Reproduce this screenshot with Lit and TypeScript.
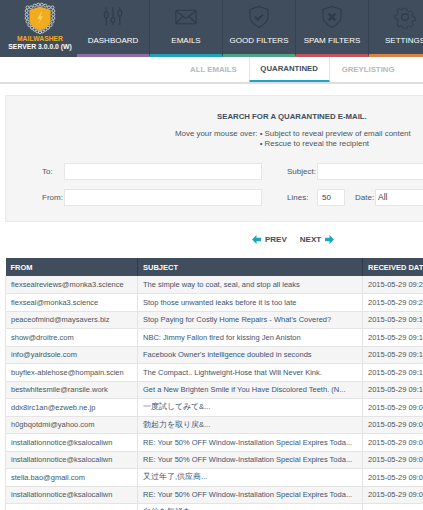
import { LitElement, html, css, svg } from "lit";
import { customElement } from "lit/decorators.js";

const NAV = [
  { label: "DASHBOARD", color: "#8f6fa3", icon: "sliders" },
  { label: "EMAILS", color: "#1ea5b8", icon: "mail" },
  { label: "GOOD FILTERS", color: "#4fa487", icon: "good" },
  { label: "SPAM FILTERS", color: "#c0565f", icon: "bad" },
  { label: "SETTINGS", color: "#d98545", icon: "gear" },
];

const LONG = "RE: Your 50% OFF Window-Installation Special Expires Toda...";
const ROWS: [string, string, string][] = [
  ["flexsealreviews@monka3.science", "The simple way to coat, seal, and stop all leaks", "2015-05-29 09:2"],
  ["flexseal@monka3.science", "Stop those unwanted leaks before it is too late", "2015-05-29 09:2"],
  ["peaceofmind@maysavers.biz", "Stop Paying for Costly Home Repairs - What's Covered?", "2015-05-29 09:1"],
  ["show@droitre.com", "NBC: Jimmy Fallon fired for kissing Jen Aniston", "2015-05-29 09:1"],
  ["info@yairdsole.com", "Facebook Owner's intelligence doubled in seconds", "2015-05-29 09:1"],
  ["buyflex-ablehose@hompain.scien", "The Compact.. Lightweight-Hose that Will Never Kink.", "2015-05-29 09:1"],
  ["bestwhitesmile@ransile.work", "Get a New Brighten Smile if You Have Discolored Teeth. (N...", "2015-05-29 09:1"],
  ["ddx8irc1an@ezweb.ne.jp", "一度試してみて&...", "2015-05-29 09:0"],
  ["h0gbqotdmi@yahoo.com", "勃起力を取り戻&...", "2015-05-29 09:0"],
  ["installationnotice@ksalocaliwn", LONG, "2015-05-29 09:0"],
  ["installationnotice@ksalocaliwn", LONG, "2015-05-29 09:0"],
  ["stella.bao@gmail.com", "又过年了,供应商...", "2015-05-29 09:0"],
  ["installationnotice@ksalocaliwn", LONG, "2015-05-29 09:0"],
  ["vinyl@ayerflex@hotbou.co.jp", "自信を無経あ...", "2015-05-29 09:0"],
];

const ICONS: Record<string, unknown> = {
  sliders: svg`<path d="M7 3v6M7 17v10M16 3v14M16 23v4M25 3v4M25 15v12"/><rect x="4.500" y="9" width="5" height="8" rx="2.500"/><rect x="13.500" y="17" width="5" height="6" rx="2.500"/><rect x="22.500" y="7" width="5" height="8" rx="2.500"/>`,
  mail: svg`<rect x="2.500" y="7" width="27" height="18" rx="1.500"/><path d="M3 8l13 10L29 8M3 24l9-9M29 24l-9-9"/>`,
  good: svg`<path d="M16 2l12 4v10c0 6-5 10-12 14C9 26 4 22 4 16V6z"/><path d="M10.500 15.500l4 4 7-7" stroke-width="2.800"/>`,
  bad: svg`<path d="M16 2l12 4v10c0 6-5 10-12 14C9 26 4 22 4 16V6z"/><path d="M11.500 11.500l9 9M20.500 11.500l-9 9" stroke-width="3"/>`,
  gear: svg`<path d="M13.500 2h5l1 4 3 1.500 3.600-2 3.400 3.500-2 3.500 1.200 3 4 1v5l-4 1-1.200 3 2 3.500-3.400 3.500-3.600-2-3 1.500-1 4h-5l-1-4-3-1.500-3.600 2L3 26l2-3.500L3.800 19.500l-4-1v-5l4-1L5 9.500 3 6l3.400-3.500 3.600 2 3-1.500z" transform="translate(2.800 2.800) scale(.82)"/><circle cx="16" cy="16" r="4.500"/>`,
};

const CHAIN = [
  [8,6],[12,4],[16,3],[20,3],[24,4],[28,6],[32,6],[33,10],[33,14],[33,18],[32,22],[30,26],[27,29],[24,31],[21,33],[18,34],[15,33],[12,31],[9,29],[6,26],[4,22],[3,18],[3,14],[3,10],[4,6],
];

@customElement("app-root")
export class AppRoot extends LitElement {
  static styles = css`
    :host { display: block; width: 423px; height: 510px; overflow: hidden; background: #fff;
      font-family: "Liberation Sans", Arial, sans-serif; color: #4a5560; font-size: 7.500px; }
    .page { width: 441px; }
    nav { display: flex; height: 57px; background: #3f4d5c; }
    .brand { width: 77px; padding-left: 3px; box-sizing: border-box; flex: none; height: 54px; display: flex; flex-direction: column; align-items: center; color: #fff; font-weight: 700; font-size: 6.800px; line-height: 8px; white-space: nowrap; }
    .brand svg { width: 32px; height: 33px; margin-top: 2px; display: block; }
    .brand b { color: #f1ab1f; font-size: 6.800px; }
    .item { width: 73px; flex: none; box-sizing: border-box; height: 57px; border-bottom: 3px solid; border-right: 1px solid #35424f; display: flex; flex-direction: column; align-items: center; color: #fff; font-size: 8px; white-space: nowrap; }
    .item:first-of-type { width: 72px; border-left: 1px solid #35424f; }
    .item svg { width: 24px; height: 24px; margin-top: 5px; margin-bottom: 7px; fill: none; stroke: #2f3b48; stroke-width: 1.500; }
    .tabs { display: flex; height: 25px; border-bottom: 2px solid #dedede; padding-left: 190px; font-size: 7.800px; font-weight: 700; color: #b5b9bc; }
    .tab { display: flex; align-items: center; white-space: nowrap; }
    .tab.on { width: 81px; box-sizing: border-box; justify-content: center; margin: 0 12px; height: 25px; color: #3f4d5c; border-left: 1px solid #e3e3e3; border-right: 1px solid #e3e3e3; border-bottom: 2px solid #1ea5c4; }
    .panel { margin: 11px 0 0 5px; height: 127px; box-sizing: border-box; background: #f5f5f5; border: 1px solid #e9e9e9; border-right: none; padding-top: 16px; }
    .title { font-size: 7.800px; font-weight: 700; color: #3f4d5c; margin-left: 211px; line-height: 10px; }
    .help { display: grid; grid-template-columns: auto auto; justify-content: start; margin: 7px 0 0 169px; font-size: 7.900px; line-height: 9.500px; color: #4a5560; }
    .help span:nth-child(3) { grid-column: 2; }
    .form { display: flex; flex-direction: column; gap: 8.500px; margin-top: 15px; font-size: 8px; }
    .row { display: flex; align-items: center; height: 17px; }
    .row label { white-space: nowrap; flex: none; }
    .l1 { width: 22px; margin-left: 36px; }
    .l2 { width: 30px; margin-left: 25px; }
    .l3 { width: 20px; margin-left: 10px; }
    .box { flex: none; height: 17px; box-sizing: border-box; background: #fff; border: 1px solid #e6e6e6; padding-left: 4px; display: flex; align-items: center; color: #444; font-size: 8px; }
    .b1 { width: 198px; }
    .b2 { width: 120px; }
    .b3 { width: 28px; }
    .b4 { width: 70px; font-size: 8.500px; padding-left: 2px; }
    .pager { display: flex; align-items: center; gap: 13px; margin: 10px 0 0 252px; height: 15px; font-size: 8px; font-weight: 700; color: #3f4d5c; }
    .pager span { display: flex; align-items: center; gap: 4px; }
    .pager svg { width: 9px; height: 9px; fill: #1ea5c4; }
    table { margin: 11px 0 0 5px; border-collapse: collapse; table-layout: fixed; width: 436px; font-size: 7.500px; }
    col.c1 { width: 132px; } col.c2 { width: 225px; } col.c3 { width: 79px; }
    th { height: 18px; padding: 0 0 0 5px; background: #3f4d5c; color: #fff; text-align: left; font-size: 7.500px; white-space: nowrap; overflow: hidden; border-right: 1px solid #2f3b48; }
    td { height: 17.500px; padding: 0 0 0 5px; white-space: nowrap; overflow: hidden; border: 1px solid #e4e4e4; border-width: 0 1px 1px 0; box-sizing: border-box; color: #4a5560; }
    td.s { color: #3b5472; }
    td.c1 { border-left: 1px solid #e4e4e4; }
    tr:nth-child(odd) td { background: #f5f5f5; }
  `;

  render() {
    return html`<div class="page">
      <nav>
        <div class="brand">
          <svg viewBox="0 0 36 37">
            ${CHAIN.map(([x, y]) => svg`<circle cx="${x}" cy="${y}" r="1.700" fill="none" stroke="#dfe3e6" stroke-width=".9"/>`)}
            <path d="M18 5l12 4v11c0 6-5 9-12 12C11 29 6 26 6 20V9z" fill="#f1ab1f"/>
            <path d="M19.500 11l-4.500 8h3l-2 6 5.500-9h-3l2-5z" fill="#f9cf5c"/>
          </svg>
          <b>MAILWASHER</b>
          <span>SERVER 3.0.0.0 (W)</span>
        </div>
        ${NAV.map(n => html`<div class="item" style="border-bottom-color:${n.color}">
          <svg viewBox="0 0 32 32">${ICONS[n.icon]}</svg>${n.label}
        </div>`)}
      </nav>
      <div class="tabs">
        <div class="tab">ALL EMAILS</div>
        <div class="tab on">QUARANTINED</div>
        <div class="tab">GREYLISTING</div>
      </div>
      <div class="panel">
        <div class="title">SEARCH FOR A QUARANTINED E-MAIL.</div>
        <div class="help">
          <span>Move your mouse over:&nbsp;</span><span>• Subject to reveal preview of email content</span>
          <span>• Rescue to reveal the recipient</span>
        </div>
        <div class="form">
          <div class="row">
            <label class="l1">To:</label><div class="box b1"></div>
            <label class="l2">Subject:</label><div class="box b2"></div>
          </div>
          <div class="row">
            <label class="l1">From:</label><div class="box b1"></div>
            <label class="l2">Lines:</label><div class="box b3">50</div>
            <label class="l3">Date:</label><div class="box b4">All</div>
          </div>
        </div>
      </div>
      <div class="pager">
        <span><svg viewBox="0 0 10 10"><path d="M5 0L0 5l5 5V7h5V3H5z"/></svg>PREV</span>
        <span>NEXT<svg viewBox="0 0 10 10"><path d="M5 0l5 5-5 5V7H0V3h5z"/></svg></span>
      </div>
      <table>
        <colgroup><col class="c1"/><col class="c2"/><col class="c3"/></colgroup>
        <thead><tr><th>FROM</th><th>SUBJECT</th><th>RECEIVED DATE</th></tr></thead>
        <tbody>
          ${ROWS.map(r => html`<tr><td class="c1">${r[0]}</td><td class="s">${r[1]}</td><td>${r[2]}</td></tr>`)}
        </tbody>
      </table>
    </div>`;
  }
}
